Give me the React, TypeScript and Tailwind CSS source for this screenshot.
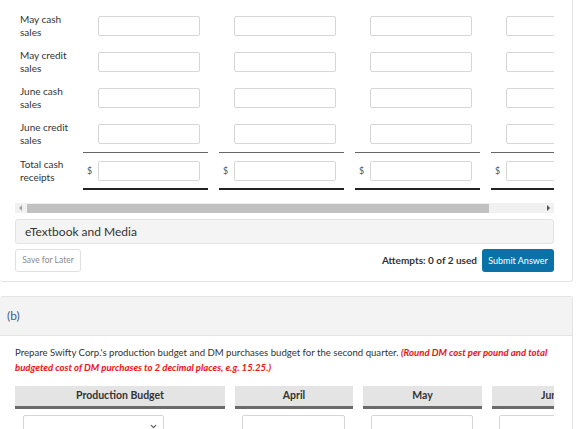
import { ChevronDown } from "lucide-react";

const rows = [
  ["April credit", "sales"],
  ["May cash", "sales"],
  ["May credit", "sales"],
  ["June cash", "sales"],
  ["June credit", "sales"],
];

const cols = [0, 1, 2, 3];

function Box({ className = "" }: { className?: string }) {
  return <div className={`h-[20px] rounded-[2px] border border-[#d6d6d6] bg-white ${className}`} />;
}

function Label({ lines }: { lines: string[] }) {
  return (
    <div className="pl-[5px] text-[10px] leading-[13px] text-[#333]">
      {lines.map((l) => (
        <div key={l}>{l}</div>
      ))}
    </div>
  );
}

export default function App() {
  return (
    <div className="h-[429px] w-[579px] overflow-hidden bg-white font-['Lato',sans-serif]">
      {/* part (a) card, scrolled */}
      <div className="w-[573px] rounded-b-[3px] border-r border-b border-[#e3e3e3] pb-[9px]">
        <div className="ml-[15px] w-[539px] overflow-hidden">
          <div className="-mt-[28px] w-[600px]">
            {rows.map((r) => (
              <div key={r[0]} className="grid h-[36px] grid-cols-[57px_125px_125px_125px_125px] items-center gap-x-[11px]">
                <Label lines={r} />
                {cols.map((c) => (
                  <div key={c} className="pl-[15px] pr-[8px]">
                    <Box />
                  </div>
                ))}
              </div>
            ))}
            <div className="grid grid-cols-[57px_125px_125px_125px_125px] gap-x-[11px]">
              <div className="flex h-[38px] items-center pb-[2px] pt-px">
                <Label lines={["Total cash", "receipts"]} />
              </div>
              {cols.map((c) => (
                <div key={c} className="flex h-[38px] items-center border-t border-b-2 border-t-[#666] border-b-[#222] pr-[8px]">
                  <span className="w-[15px] pl-[4px] text-[9px] text-[#555]">$</span>
                  <Box className="flex-1" />
                </div>
              ))}
            </div>
          </div>
        </div>

        {/* scrollbar */}
        <div className="mx-[15px] mt-[13px] flex h-[10px] w-[539px] items-center bg-[#f1f1f1]">
          <span className="ml-[4px] h-0 w-0 border-y-[3px] border-r-[3px] border-y-transparent border-r-[#a3a3a3]" />
          <div className="ml-[5px] h-[9px] w-[462px] bg-[#c1c1c1]" />
          <span className="ml-auto mr-[4px] h-0 w-0 border-y-[3px] border-l-[3px] border-y-transparent border-l-[#505050]" />
        </div>

        <div className="mx-[15px] mt-[6px] flex h-[25px] w-[539px] items-center rounded-[3px] border border-[#e2e2e2] bg-[#f4f4f4] pl-[9px] text-[12px] text-[#333]">
          eTextbook and Media
        </div>

        <div className="mx-[15px] mt-[5px] flex w-[539px] items-center">
          <button className="h-[23px] w-[66px] rounded-[3px] border border-[#e0e0e0] bg-white text-[8.5px] text-[#8a8a8a]">
            Save for Later
          </button>
          <span className="ml-auto mr-[5px] text-[10px] font-bold text-[#333]">Attempts: 0 of 2 used</span>
          <button className="h-[23px] w-[72px] rounded-[3px] bg-[#0b72a7] text-[9px] text-white">Submit Answer</button>
        </div>
      </div>

      {/* part (b) card */}
      <div className="mt-[14px] w-[573px] rounded-t-[3px] border-t border-r border-[#e3e3e3]">
        <div className="flex h-[39px] items-center border-b border-[#e3e3e3] bg-[#f3f3f3] pl-[7px] text-[12px] text-[#3b5e8c]">
          (b)
        </div>
        <p className="mt-[9px] px-[15px] text-[9.6px] leading-[15px] text-[#333]">
          Prepare Swifty Corp.'s production budget and DM purchases budget for the second quarter.{" "}
          <span className="font-bold italic text-[#ee1111]">
            (Round DM cost per pound and total budgeted cost of DM purchases to 2 decimal places, e.g. 15.25.)
          </span>
        </p>
        <div className="ml-[15px] mt-[11px] w-[539px] overflow-hidden">
          <div className="grid w-[620px] grid-cols-[210px_118px_119px_120px] gap-x-[10px] text-[10.5px] font-bold text-[#333]">
            <div className="flex h-[23px] items-center justify-center border-b-[3px] border-[#6a6a6a] bg-[#e4e4e4]">Production Budget</div>
            <div className="flex h-[23px] items-center justify-center border-b-[3px] border-[#6a6a6a] bg-[#e4e4e4]">April</div>
            <div className="flex h-[23px] items-center justify-center border-b-[3px] border-[#6a6a6a] bg-[#e4e4e4]">May</div>
            <div className="flex h-[23px] items-center justify-center border-b-[3px] border-[#6a6a6a] bg-[#e4e4e4]">June</div>
          </div>
          <div className="mt-[6px] grid w-[620px] grid-cols-[210px_118px_119px_120px] gap-x-[10px]">
            <div className="pl-[8px] pr-[61px]">
              <div className="flex h-[22px] items-center justify-end rounded-[2px] border border-[#d6d6d6] bg-white pr-[5px]">
                <ChevronDown size={9} strokeWidth={3} className="text-[#555]" />
              </div>
            </div>
            <div className="pl-[7px] pr-[8px]"><div className="h-[22px] rounded-[2px] border border-[#d6d6d6]" /></div>
            <div className="pl-[8px] pr-[9px]"><div className="h-[22px] rounded-[2px] border border-[#d6d6d6]" /></div>
            <div className="pl-[7px] pr-[8px]"><div className="h-[22px] rounded-[2px] border border-[#d6d6d6]" /></div>
          </div>
        </div>
      </div>
    </div>
  );
}
